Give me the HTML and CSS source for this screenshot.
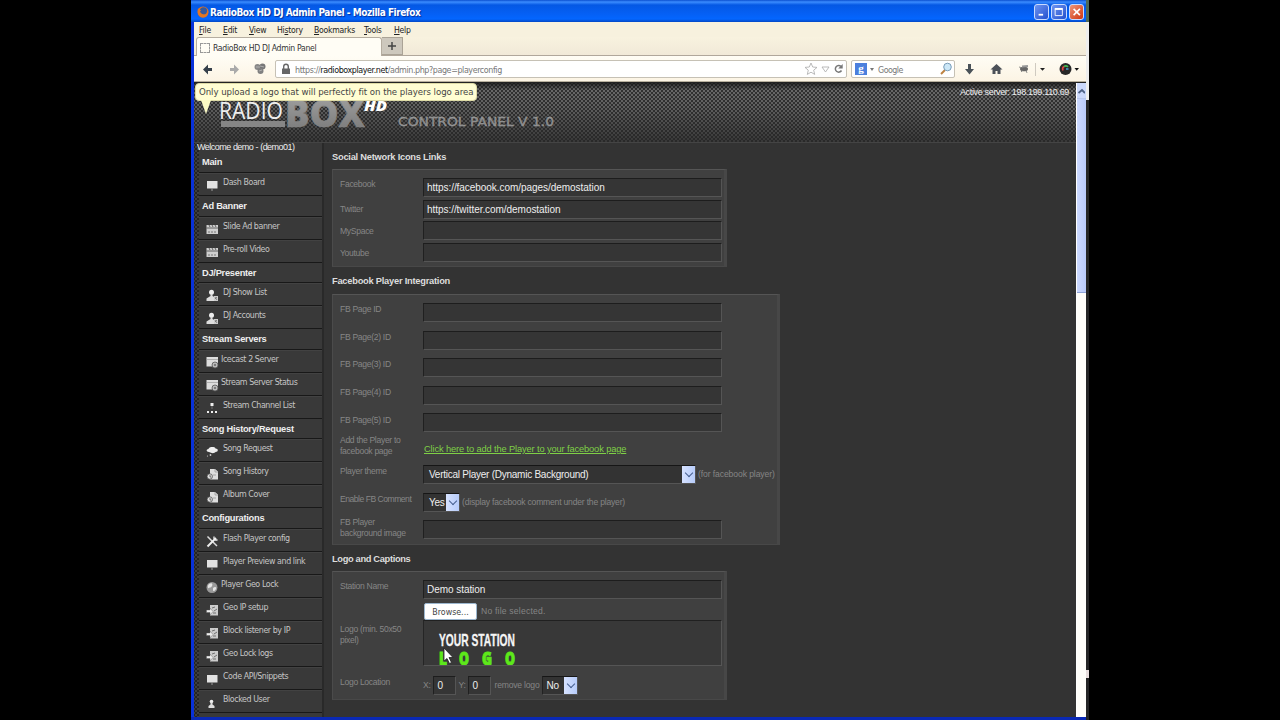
FILE: index.html
```html
<!DOCTYPE html>
<html lang="en">
<head>
<meta charset="utf-8">
<title>RadioBox HD DJ Admin Panel</title>
<link rel="stylesheet" href="styles.css">
</head>
<body>
<svg class="defs" width="0" height="0">
  <defs>
    <linearGradient id="metal" x1="0" y1="0" x2="0" y2="1"><stop offset="0" stop-color="#a8a8a8"/><stop offset="1" stop-color="#747474"/></linearGradient>
    <g id="i-board"><path d="M1 2h10.500v7.500H1z" fill="#e2e2e2"/><path d="M6 9v3" stroke="#999"/></g>
    <g id="i-clap"><path d="M.5 2h11.500v9H.5z" fill="#cfcfcf"/><path d="M.5 5h11.500M3 2l1 2M6 2l1 2M9 2l1 2" stroke="#444" stroke-width=".8"/><path d="M2 9h8" stroke="#777" stroke-dasharray="2 1"/></g>
    <g id="i-dj"><circle cx="5.500" cy="3.200" r="2.500" fill="#eee"/><path d="M4.500 5h2v2l3 1.500V12H.5V9.500l4-2.500z" fill="#ddd"/><path d="M8 7h4v5H8z" fill="#ccc"/><path d="M9 8l2 3M11 8l-2 2" stroke="#666" stroke-width=".7"/></g>
    <g id="i-server"><path d="M.5 1H12v9.500H.5z" fill="#ddd"/><path d="M.5 3.500H12" stroke="#999" stroke-width=".7"/><circle cx="9" cy="9" r="3" fill="#bbb" stroke="#555" stroke-width=".8"/><circle cx="9" cy="9" r="1" fill="#666"/></g>
    <g id="i-tree"><path d="M4.500 1h3v3h-3zM1 9h2v2H1zM5 9h2v2H5zM9 9h2v2H9z" fill="#eee"/><path d="M6 4v3" stroke="#888" stroke-width=".7"/></g>
    <g id="i-cloud"><path d="M3 7C0 7 0 4 2.500 4 3 1.500 9 1.500 9.500 3.500c3 0 3 3.500 0 3.500-1 1.500-4 1.500-6.500 0z" fill="#eee"/><circle cx="4.500" cy="10" r=".9" fill="#ccc"/><circle cx="1.500" cy="11" r=".6" fill="#ccc"/></g>
    <g id="i-doc"><path d="M4 1h5l3 2.500V11.500H4z" fill="#ddd"/><path d="M9 1v3h3M7 7h3" stroke="#999" fill="none" stroke-width=".8"/><circle cx="3.800" cy="8.500" r="2.700" fill="#ddd" stroke="#444" stroke-width=".7"/><path d="M4 7v2h1.500" stroke="#444" fill="none" stroke-width=".7"/></g>
    <g id="i-script"><path d="M4 1h8v10.500H4z" fill="#ccc"/><path d="M6 4l3-1M8 7l3-2M7 9h3" stroke="#666" stroke-width=".9"/><path d="M.5 6H4V4l3 3.500L4 11V8.500H.5z" fill="#eee" stroke="#555" stroke-width=".4"/></g>
    <g id="i-tools"><path d="M1.500 1.500l9.500 9.500" stroke="#ddd" stroke-width="1.500"/><path d="M1.500 11.500l8.500-8.500" stroke="#eee" stroke-width="1.900"/><path d="M8 1.500v2l1.500 1.500h2" stroke="#eee" fill="none" stroke-width="1.300"/></g>
    <g id="i-globe"><circle cx="6" cy="6.500" r="5.500" fill="#999"/><path d="M3 3c3-2 4 0 3 2s-2 1-3 2-2-2 0-4zM7 7c2-2 4-1 3 1S7 11 7 9z" fill="#e5e5e5"/></g>
    <g id="i-user"><circle cx="5.500" cy="5.500" r="1.800" fill="#eee"/><path d="M4.500 6.500h2v2l2 1.500v2h-6v-2l2-1.500z" fill="#ddd"/></g>
  </defs>
</svg>
<div class="window">
  <header class="titlebar">
    <svg class="fox" width="12" height="12" viewBox="0 0 12 12"><circle cx="6" cy="6" r="5.500" fill="#e5731d"/><circle cx="6.500" cy="4.800" r="3.600" fill="#34599e"/><path d="M1 2c1 2 1.500 1 3 2.500L2.800 6 5 8c3 2 6 0 6-4 1 4-1 7.500-5 7.500S0 8 1 2z" fill="#e37622"/></svg>
    <h1>RadioBox HD DJ Admin Panel - Mozilla Firefox</h1>
    <div class="controls">
      <span class="wbtn"><svg viewBox="0 0 15 15"><path d="M4 10.500h5" stroke="#fff" stroke-width="2"/></svg></span>
      <span class="wbtn"><svg viewBox="0 0 15 15"><path d="M3.500 4.500h8v7h-8z" stroke="#fff" fill="none"/><path d="M3 4h9" stroke="#fff" stroke-width="2"/></svg></span>
      <span class="wbtn close"><svg viewBox="0 0 15 15"><path d="M4 4l7 7M11 4l-7 7" stroke="#fff" stroke-width="1.800"/></svg></span>
    </div>
  </header>
  <nav class="menubar"><span class="m1"><u>F</u>ile</span><span class="m2"><u>E</u>dit</span><span class="m3"><u>V</u>iew</span><span class="m4">Hi<u>s</u>tory</span><span class="m5"><u>B</u>ookmarks</span><span class="m6"><u>T</u>ools</span><span><u>H</u>elp</span></nav>
  <div class="tabs">
    <div class="tab"><i class="blankicon"></i><span>RadioBox HD DJ Admin Panel</span></div>
    <div class="newtab"><svg width="10" height="10" viewBox="0 0 10 10"><path d="M5 1v8M1 5h8" stroke="#444" stroke-width="1.500"/></svg></div>
  </div>
  <div class="navbar">
    <svg class="nav-left" width="80" height="24" viewBox="0 0 80 24">
      <path d="M9 12.500l5-5v3.500h4v3h-4v3.500z" fill="#36404b"/><path d="M45 12.500l-5-5v3.500h-4v3h4v3.500z" fill="#aaa"/>
      <circle cx="63.500" cy="10" r="3" fill="#888"/><circle cx="68.500" cy="9.500" r="3" fill="#777"/><circle cx="66.500" cy="14" r="3" fill="#808080"/><path d="M62 10h4M66 9l4 1M65 14l3-1" stroke="#bbb" stroke-width=".8"/>
    </svg>
    <div class="url">
      <svg width="10" height="12" viewBox="0 0 10 12"><path d="M2.700 6V3.500a2.200 2.200 0 0 1 4.600 0V6" fill="none" stroke="#666" stroke-width="1.400"/><path d="M1 5.500h8V11H1z" fill="#666"/></svg>
      <span class="address">https://<b>radioboxplayer.net</b>/admin.php?page=playerconfig</span>
      <svg class="url-icons" width="42" height="14" viewBox="0 0 42 14"><path d="M7 1l1.700 4 4.300.4-3.300 2.800 1 4.200L7 10.200l-3.700 2.200 1-4.200L1 5.400 5.300 5z" fill="#fff" stroke="#aaa" stroke-width=".8"/><path d="M18 5h7l-3.500 5z" fill="#fff" stroke="#aaa" stroke-width=".8"/><path d="M37 4.500a3.300 3.300 0 1 0 .5 4" fill="none" stroke="#777" stroke-width="1.500"/><path d="M38.700 2v4.500h-4.500z" fill="#777"/></svg>
    </div>
    <div class="search">
      <span class="g">g</span><i class="caret grey"></i><span class="google">Google</span>
      <svg width="14" height="14" viewBox="0 0 14 14"><path d="M2 12l4-4" stroke="#bd8240" stroke-width="2"/><circle cx="8.500" cy="5" r="3.800" fill="#cce7f7" stroke="#789cb8"/></svg>
    </div>
    <svg class="nav-right" width="124" height="24" viewBox="0 0 124 24">
      <path d="M13 7h3v5h3L14.500 17.500 10 12h3z" fill="#4a5258"/><path d="M35.500 12.500l6-5.500 6 5.500h-2V17h-3v-3h-2v3h-3v-4.500z" fill="#4c5158"/>
      <ellipse cx="69" cy="12" rx="4" ry="2.300" fill="#666"/><path d="M64 10l4 1M66 15l2-2M71 13l1 3" stroke="#777" stroke-width=".8"/><path d="M67 9.500l6-.5" stroke="#999" stroke-width="2"/>
      <path d="M80.500 6v13" stroke="#cfcac0"/><path d="M85 11h5L87.500 13.700z" fill="#222"/>
      <circle cx="110.500" cy="12" r="6" fill="#282828"/><path d="M108 13.500a3.200 3.200 0 0 1 1-4" stroke="#d44" fill="none" stroke-width="1.600"/><path d="M109 9.500a3 3 0 0 1 4 .5" stroke="#4b5" fill="none" stroke-width="1.600"/><path d="M111 12l2.500 0" stroke="#49c" stroke-width="1.600"/><path d="M119.500 11h4.500l-2.300 2.700z" fill="#111"/>
    </svg>
  </div>
  <div class="view">
    <div class="tooltip">Only upload a logo that will perfectly fit on the players logo area</div>
    <div class="page">
      <div class="banner">
        <svg class="logo" width="370" height="50" viewBox="0 0 370 50">
          <path d="M27 38h64v6H27z" fill="#868686"/>
          <text class="t-radio" x="25" y="36" textLength="64" lengthAdjust="spacingAndGlyphs">RADIO</text>
          <text class="t-box" x="91" y="44" textLength="80" lengthAdjust="spacingAndGlyphs">BOX</text>
          <text class="t-hd" x="170" y="28" textLength="23" lengthAdjust="spacingAndGlyphs">HD</text>
          <text class="t-panel" x="204" y="43" textLength="156" lengthAdjust="spacingAndGlyphs">CONTROL PANEL V 1.0</text>
        </svg>
        <div class="active">Active server: 198.199.110.69</div>
      </div>
      <div class="columns">
        <aside class="sidebar">
          <div class="welcome">Welcome demo - (demo01)</div>
          <h2>Main</h2>
          <a><svg><use href="#i-board"/></svg>Dash Board</a>
          <h2>Ad Banner</h2>
          <a><svg><use href="#i-clap"/></svg>Slide Ad banner</a>
          <a><svg><use href="#i-clap"/></svg>Pre-roll Video</a>
          <h2>DJ/Presenter</h2>
          <a><svg><use href="#i-dj"/></svg>DJ Show List</a>
          <a><svg><use href="#i-dj"/></svg>DJ Accounts</a>
          <h2>Stream Servers</h2>
          <a class="near"><svg><use href="#i-server"/></svg>Icecast 2 Server</a>
          <a class="near"><svg><use href="#i-server"/></svg>Stream Server Status</a>
          <a><svg><use href="#i-tree"/></svg>Stream Channel List</a>
          <h2>Song History/Request</h2>
          <a><svg><use href="#i-cloud"/></svg>Song Request</a>
          <a><svg><use href="#i-doc"/></svg>Song History</a>
          <a><svg><use href="#i-doc"/></svg>Album Cover</a>
          <h2>Configurations</h2>
          <a><svg><use href="#i-tools"/></svg>Flash Player config</a>
          <a><svg><use href="#i-board"/></svg>Player Preview and link</a>
          <a class="near"><svg><use href="#i-globe"/></svg>Player Geo Lock</a>
          <a><svg><use href="#i-script"/></svg>Geo IP setup</a>
          <a><svg><use href="#i-script"/></svg>Block listener by IP</a>
          <a><svg><use href="#i-script"/></svg>Geo Lock logs</a>
          <a><svg><use href="#i-board"/></svg>Code API/Snippets</a>
          <a><svg><use href="#i-user"/></svg>Blocked User</a>
          <div class="rest"></div>
        </aside>
        <main>
          <h3 class="first">Social Network Icons Links</h3>
          <section class="panel social">
            <div class="row"><label class="up">Facebook</label><div class="field">https://facebook.com/pages/demostation</div></div>
            <div class="row"><label>Twitter</label><div class="field">https://twitter.com/demostation</div></div>
            <div class="row"><label>MySpace</label><div class="field"></div></div>
            <div class="row"><label>Youtube</label><div class="field"></div></div>
          </section>
          <h3>Facebook Player Integration</h3>
          <section class="panel fb">
            <div class="row"><label>FB Page ID</label><div class="field"></div></div>
            <div class="row"><label>FB Page(2) ID</label><div class="field"></div></div>
            <div class="row"><label>FB Page(3) ID</label><div class="field"></div></div>
            <div class="row"><label>FB Page(4) ID</label><div class="field"></div></div>
            <div class="row"><label>FB Page(5) ID</label><div class="field"></div></div>
            <div class="row linkrow"><label>Add the Player to<br>facebook page</label><a>Click here to add the Player to your facebook page</a></div>
            <div class="row"><label>Player theme</label><div class="select theme"><span>Vertical Player (Dynamic Background)</span><i></i></div><span class="note n1">(for facebook player)</span></div>
            <div class="row"><label class="tight">Enable FB Comment</label><div class="select yes"><span>Yes</span><i></i></div><span class="note n2">(display facebook comment under the player)</span></div>
            <div class="row"><label class="two">FB Player<br>background image</label><div class="field"></div></div>
          </section>
          <h3 class="third">Logo and Captions</h3>
          <section class="panel captions">
            <div class="row station"><label>Station Name</label><div class="field">Demo station</div></div>
            <div class="row logorow"><label>Logo (min. 50x50<br>pixel)</label>
              <div class="upload">
                <div class="file"><span class="browse">Browse...</span><span class="note n3">No file selected.</span></div>
                <div class="preview">
                  <svg width="110" height="44" viewBox="0 0 110 44">
                    <text class="t-your" x="15" y="25" textLength="76" lengthAdjust="spacingAndGlyphs">YOUR STATION</text>
                    <g class="t-logo"><text x="15" y="43.500" textLength="8" lengthAdjust="spacingAndGlyphs">L</text><text x="35" y="43.500" textLength="10" lengthAdjust="spacingAndGlyphs">O</text><text x="58" y="43.500" textLength="10" lengthAdjust="spacingAndGlyphs">G</text><text x="81" y="43.500" textLength="10" lengthAdjust="spacingAndGlyphs">O</text></g>
                    <path d="M20 27v13l3-2.500 2.500 5 2-1-2.500-5h4z" fill="#fff" stroke="#222" stroke-width=".8"/>
                  </svg>
                </div>
              </div>
            </div>
            <div class="row locrow"><label>Logo Location</label><span class="note x">X:</span><div class="field num">0</div><span class="note y">Y:</span><div class="field num">0</div><span class="note rm">remove logo</span><div class="select no"><span>No</span><i></i></div></div>
          </section>
        </main>
      </div>
    </div>
    <div class="scrollbar"><div class="sb-up"><svg width="8" height="11" viewBox="0 0 8 11"><path d="M1.500 10L5 7l3 3" fill="none" stroke="#4d6185" stroke-width="1.800"/></svg></div><div class="thumb"></div></div>
  </div>
</div>
<div class="behind"><i class="top"></i><i class="white"></i><i class="dark"></i><i class="low"></i><i class="dark end"></i></div>
</body>
</html>
```
FILE: styles.css
```css
* { box-sizing: border-box; }
body { margin: 0; width: 1280px; height: 720px; overflow: hidden; background: #000; display: flex; padding-left: 191px; font-family: "Liberation Sans", Arial, sans-serif; }
.defs { position: absolute; }
h1, h2, h3 { margin: 0; }
span, label, h1, h2, h3, a { white-space: nowrap; }

.window { width: 895px; height: 720px; background: #0831d9; border-bottom: 3px solid #0a29b5; display: flex; flex-direction: column; overflow: hidden; }
.titlebar { height: 22px; display: flex; align-items: center; padding: 3px 2px 0 6px; background: linear-gradient(#0a4fd0 0, #3b8cff 2px, #0458e4 5px, #0560f5 14px, #0366ff 19px, #0347c4 22px); }
.titlebar h1 { font: bold 10px "DejaVu Sans Condensed", "DejaVu Sans", sans-serif; letter-spacing: -0.46px; color: #fff; margin: 1px 0 0 1px; text-shadow: 1px 1px 1px #05309a; }
.controls { margin-left: auto; display: flex; gap: 2px; }
.wbtn { width: 15.500px; height: 16px; border: 1px solid #c9dbff; border-radius: 3px; background: linear-gradient(135deg, #6d94f0, #2350cf); display: flex; }
.wbtn.close { background: linear-gradient(135deg, #ee9678, #cf3510); }

.menubar { margin-left: 3px; height: 16px; background: #f7f1de; display: flex; align-items: center; padding-left: 5px; font: 8.600px "DejaVu Sans Condensed", "DejaVu Sans", sans-serif; letter-spacing: -.25px; color: #222; }
.menubar .m1 { width: 24px; } .menubar .m2 { width: 26px; } .menubar .m3 { width: 28px; } .menubar .m4 { width: 37px; } .menubar .m5 { width: 50px; } .menubar .m6 { width: 30px; }

.tabs { margin-left: 3px; height: 19px; background: linear-gradient(#f8f2df, #f1e9d8); border-bottom: 1px solid #b0a79b; display: flex; padding-left: 2px; }
.tab { width: 186px; height: 19px; background: #fffdf5; border: 1px solid #b5ada0; border-bottom: 0; border-radius: 3px 3px 0 0; display: flex; align-items: center; padding: 2px 0 0 3px; font: 8.600px "DejaVu Sans Condensed", "DejaVu Sans", sans-serif; letter-spacing: -.31px; color: #333; }
.blankicon { width: 10px; height: 10px; border: 1px dashed #999; margin-right: 3px; }
.newtab { width: 21px; height: 18px; border: 1px solid #aaa396; border-left: 0; background: #cdc8bd; display: flex; align-items: center; justify-content: center; }

.navbar { margin-left: 3px; height: 26px; background: linear-gradient(#fffdf5, #fcf4e4); border-bottom: 1px solid #b8b09e; display: flex; align-items: center; }
.url { width: 572px; height: 18px; border: 1px solid #c6c1b5; border-radius: 2px; background: #fff; display: flex; align-items: center; padding: 0 0 0 5px; margin: 1px 0 0 1px; }
.address { font: 8.900px "DejaVu Sans Condensed", "DejaVu Sans", sans-serif; color: #777; margin: 1px 0 0 4px; letter-spacing: -0.41px; }
.address b { font-weight: normal; color: #111; }
.url-icons { margin-left: auto; }
.search { width: 104px; height: 18px; margin: 1px 0 0 4px; border: 1px solid #c6c1b5; border-radius: 2px; background: #fff; display: flex; align-items: center; padding: 0 1px 0 3px; }
.g { width: 12px; height: 12px; background: #4b7fdd; color: #fff; font: bold 11px/10px "Liberation Serif", serif; text-align: center; }
.caret { border: 2px solid transparent; border-top: 3px solid #777; border-bottom: 0; margin: 0 4px 0 3px; }
.google { font: 8.800px "DejaVu Sans Condensed", "DejaVu Sans", sans-serif; letter-spacing: -.5px; color: #777; margin-top: 1px; }
.search svg { margin-left: auto; }

.view { margin-left: 3px; height: 635px; display: flex; position: relative; background: #333; border-top: 1px solid #222; }
.page { width: 882px; height: 634px; background-color: #333; }
.banner { height: 60px; display: flex; justify-content: space-between; border-bottom: 1px solid #444; background:
  linear-gradient(rgba(20,20,20,.75) 0, rgba(30,30,30,0) 7px, rgba(40,40,40,.15) 25px, rgba(38,38,38,.75) 60px),
  radial-gradient(circle, #303030 .8px, transparent 1.700px) 0 0 / 4px 4px,
  radial-gradient(circle, #303030 .8px, transparent 1.700px) 2px 2px / 4px 4px, #7a7a7a; }
.logo { display: block; }
.logo text { font-family: "Liberation Sans", sans-serif; }
.logo .t-radio { font: 400 23px "Open Sans", sans-serif; fill: #eee; }
.logo .t-box { font: 800 37px "Open Sans", sans-serif; fill: url(#metal); stroke: #858585; stroke-width: .6px; }
.logo .t-hd { font: italic 800 14px "Open Sans", sans-serif; fill: #fff; }
.logo .t-panel { font: 13px "DejaVu Sans", sans-serif; fill: #888; stroke: #a4a4a4; stroke-width: .3px; }
.active { color: #eee; font-size: 9px; line-height: 10px; padding: 4px 7px 0 0; letter-spacing: -.34px; }
.tooltip { position: absolute; left: 1px; top: 0; width: 282px; height: 18px; border-radius: 4px; background: #fffdd2; border: 1px solid #dedba6; font: 8.600px/17px "DejaVu Sans", sans-serif; letter-spacing: -.05px; color: #444; padding-left: 3px; white-space: nowrap; }
.tooltip::after { content: ""; position: absolute; left: 5px; top: 16px; border: 5px solid transparent; border-top: 14px solid #fcfac4; border-bottom: 0; }

.columns { display: flex; height: 574px; }
.sidebar { width: 130px; height: 574px; overflow: hidden; padding-left: 5px; border-right: 2px solid #292929; background:
  linear-gradient(#393939, #393939) 5px 0 no-repeat,
  radial-gradient(circle, #242424 .8px, transparent 1.700px) 0 0 / 4px 4px,
  radial-gradient(circle, #242424 .8px, transparent 1.700px) 2px 2px / 4px 4px, #484848; }
.welcome { margin-left: -2px; height: 9.100px; font-size: 9px; line-height: 9px; letter-spacing: -.52px; word-spacing: .2px; color: #eee; white-space: nowrap; }
.sidebar h2 { height: 20.260px; padding-left: 3px; font-size: 9.300px; line-height: 20px; color: #eee; letter-spacing: -.27px; }
.sidebar a { display: flex; height: 23.100px; padding-left: 7px; border-top: 1px solid #181818; box-shadow: inset 0 1px #424242; font: 8.800px/18px "DejaVu Sans Condensed", "DejaVu Sans", sans-serif; letter-spacing: -.42px; color: #c6c6c6; }
.sidebar a + h2, .rest { border-top: 1px solid #181818; }
.rest { height: 5px; }
.sidebar svg { width: 13px; height: 13px; margin: 6px 4px 0 0; flex: none; }
.sidebar .near svg { margin-right: 2px; }

main { padding-left: 8px; }
h3 { font-size: 9.300px; line-height: 12px; letter-spacing: -.24px; color: #ddd; }
h3.first { margin-top: 8px; padding-bottom: 6px; height: 18px; }
main h3:not(.first) { height: 27px; line-height: 29px; }
main h3.third { height: 26px; line-height: 28px; letter-spacing: -.34px; }
.panel { width: 395px; background: #404040; border: 1px solid #4b4b4b; border-top-color: #555; border-right: 3px solid #474747; border-bottom-color: #484848; padding: 8px 0 0 7px; }
.social { height: 98px; }
.fb { width: 448px; height: 251px; }
.captions { height: 129px; }
.row { display: flex; align-items: flex-start; height: 27.600px; }
.social .row { height: 21.700px; }
label { width: 83px; flex: none; font-size: 8.600px; line-height: 10.500px; letter-spacing: -.32px; color: #868686; padding-top: 1.300px; }
label.tight { letter-spacing: -.5px; }
.social label { padding-top: 4.500px; }
.social .up { padding-top: 1px; }
.field { width: 299px; flex: none; height: 19px; background: #353535; border: 1px solid #555; border-top-color: #1d1d1d; border-left-color: #202020; font-size: 10px; line-height: 18px; letter-spacing: -.05px; color: #eee; padding-left: 3px; white-space: nowrap; }
.linkrow { height: 24px; }
.linkrow label { padding-top: 0; margin-top: -5.500px; }
.linkrow a { color: #7fd046; text-decoration: underline; font-size: 9.300px; line-height: 16px; letter-spacing: -.13px; margin-left: 1px; }
.fb .two { padding-top: 0; margin-top: -3px; }
.select { height: 19px; flex: none; background: #333; border: 1px solid #555; border-top-color: #161616; border-left-color: #222; display: flex; justify-content: space-between; font-size: 10px; line-height: 17px; letter-spacing: -.25px; color: #eee; padding-left: 5px; }
.select i { width: 13px; height: 17px; background: linear-gradient(90deg, #d6e2ff, #b7ccfa); position: relative; }
.select i::after { content: ""; position: absolute; left: 4px; top: 4px; width: 5px; height: 5px; border: solid #465f8f; border-width: 0 1.500px 1.500px 0; transform: rotate(45deg); }
.theme { width: 273px; } .yes { width: 37px; } .no { width: 36px; padding-left: 4px; }
.note { font-size: 8.600px; line-height: 19px; letter-spacing: -.21px; color: #858585; margin-left: 2px; }
.note.n1 { letter-spacing: -.1px; }
.station { height: 23px; }
.logorow { height: 73px; }
.logorow label { padding-top: 21px; }
.file { display: flex; height: 17px; }
.browse { width: 53px; height: 17px; margin-left: 1px; background: #fff; border: 1px solid #9cb7cf; border-radius: 2px; font: 8.800px/16px "DejaVu Sans Condensed", "DejaVu Sans", sans-serif; color: #444; text-align: center; }
.note.n3 { margin-left: 4px; line-height: 17px; letter-spacing: .2px; }
.preview { width: 299px; height: 46px; border: 1px solid #555; border-top-color: #202020; border-left-color: #252525; background: #383838; }
.preview svg { display: block; }
.t-your { font: bold 17px "Liberation Sans", sans-serif; fill: #f5f5f5; stroke: #f5f5f5; stroke-width: .3px; }
.t-logo { font: 800 18px "Open Sans", sans-serif; fill: #5de81a; stroke: #5de81a; stroke-width: 1px; }
.num { width: 23px; padding-left: 4px; }
.note.x { margin-left: 0; width: 9.500px; } .note.y { margin-left: 3px; width: 9px; } .note.rm { margin: 0 0 0 4px; width: 47px; }

.scrollbar { width: 10px; height: 634px; background: #fffefa; border-left: 1px solid #fff; }
.sb-up { height: 16px; background: #ccd9fc; border-bottom: 1px solid #b8c8ee; }
.sb-up svg { display: block; }
.thumb { height: 194px; background: linear-gradient(90deg, #ccd9ff, #b9cafa); border-bottom: 1px solid #8fa4d8; }
.behind { width: 3px; height: 720px; display: flex; flex-direction: column; background: #222; }
.behind .top { height: 22px; background: #4d6a58; }
.behind .white { height: 78px; background: #eee; }
.behind .dark { height: 570px; background: #252525; }
.behind .low { height: 8px; background: #e8dede; }
.behind .end { height: 42px; }
```
